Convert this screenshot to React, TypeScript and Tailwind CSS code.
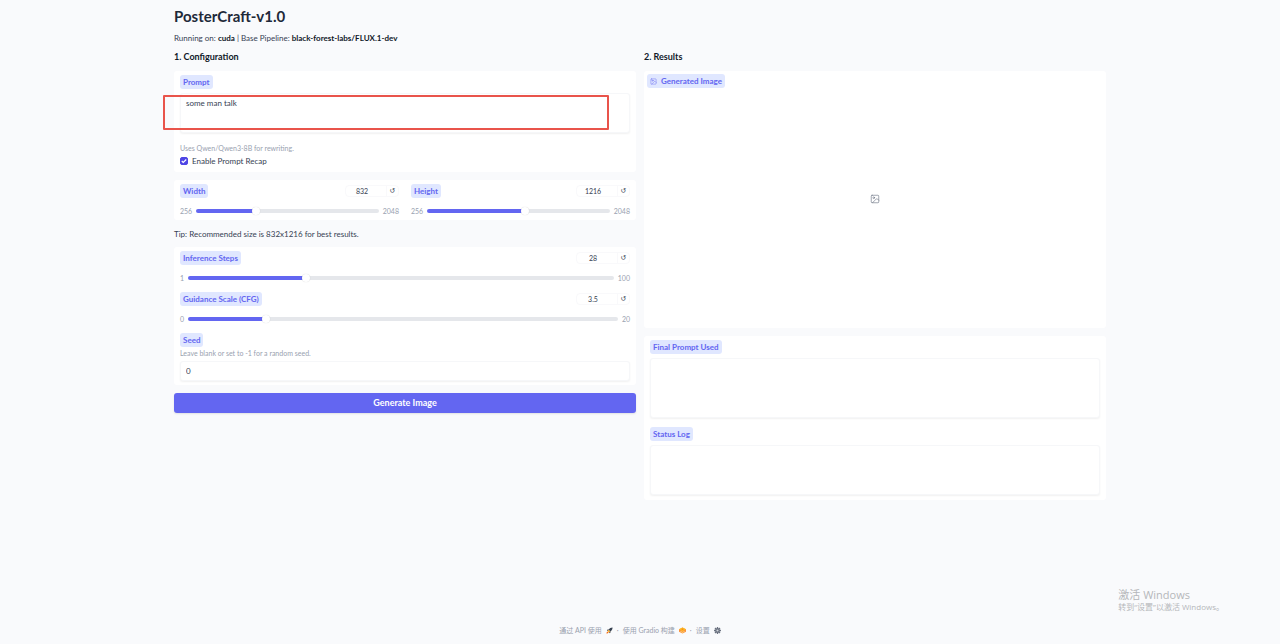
import { useId, useState } from "react";
import type { ReactNode } from "react";
import { Image as ImageIcon } from "lucide-react";

const CHIP =
  "flex w-fit h-3.5 items-center gap-1 rounded-[3px] bg-[#e0e7ff] px-[3px] text-[8px] font-bold whitespace-nowrap text-[#6366f1]";
const FIELD =
  "block w-full resize-none rounded-[3px] border border-[#f6f7f9] bg-white px-[5px] text-[8px] text-gray-700 shadow-[0_1px_2px_rgba(0,0,0,0.06)] outline-none";

function Card({ className = "", children }: { className?: string; children: ReactNode }) {
  return <div className={`rounded-[3px] bg-white ${className}`}>{children}</div>;
}

type SliderFieldProps = {
  label: string;
  min: number;
  max: number;
  step?: number;
  initial: number;
};

// Chip label, number box with reset, and the range below, all on one value.
function SliderField({ label, min, max, step = 1, initial }: SliderFieldProps) {
  const id = useId();
  const [value, setValue] = useState(initial);
  const percent = ((value - min) / (max - min)) * 100;

  return (
    <div className="flex flex-col gap-[7px]">
      <div className="flex h-3.5 items-center justify-between">
        <label htmlFor={id} className={CHIP}>
          {label}
        </label>
        <div className="flex h-3 overflow-hidden rounded-sm border border-[#f9f9fb]">
          <input
            type="number"
            aria-label={`${label} value`}
            min={min}
            max={max}
            step={step}
            value={value}
            onChange={(e) => setValue(Number(e.target.value))}
            className="w-10 appearance-none pr-2 text-center text-[7px] text-gray-700 outline-none [appearance:textfield] [&::-webkit-inner-spin-button]:appearance-none"
          />
          <button
            type="button"
            aria-label={`Reset ${label}`}
            onClick={() => setValue(initial)}
            className="flex w-3 items-center justify-center border-l border-[#f9f9fb] font-['DejaVu_Sans'] text-[7px] text-gray-700"
          >
            ↺
          </button>
        </div>
      </div>
      <div className="flex h-3 items-center gap-1 text-[7px] text-gray-400">
        <span>{min}</span>
        <input
          id={id}
          type="range"
          min={min}
          max={max}
          step={step}
          value={value}
          onChange={(e) => setValue(Number(e.target.value))}
          style={{ backgroundImage: `linear-gradient(to right, #6366f1 ${percent}%, #e5e7eb ${percent}%)` }}
          className="h-1 min-w-0 flex-1 appearance-none rounded-full [&::-webkit-slider-thumb]:size-2 [&::-webkit-slider-thumb]:appearance-none [&::-webkit-slider-thumb]:rounded-full [&::-webkit-slider-thumb]:bg-white [&::-webkit-slider-thumb]:shadow-[0_0_1px_rgba(0,0,0,0.2)]"
        />
        <span>{max}</span>
      </div>
    </div>
  );
}

function RocketIcon() {
  return (
    <svg viewBox="0 0 16 16" className="size-[7px]" aria-hidden="true">
      <path d="M15 1c-4 0-7 2-9 5l4 4c3-2 5-5 5-9Z" fill="#374151" />
      <path d="M6 5 2 7l2 2 2-3Zm5 5-2 4-2-2 3-2Z" fill="#1f2937" />
      <path d="m5 6 5 5-3 1-3-3 1-3Z" fill="#f59e0b" />
      <path d="M4 10c-2 0-3 3-3 5 2 0 5-1 5-3l-2-2Z" fill="#f97316" />
    </svg>
  );
}

function GradioIcon() {
  return (
    <svg viewBox="0 0 16 16" className="size-[7px]" aria-hidden="true">
      <path d="M8 1 0 5v6l8 4 8-4V5L8 1Z" fill="#fb923c" />
      <path d="M8 1 0 5l8 4 8-4-8-4Z" fill="#fbbf24" />
      <path d="m5 5 3-1.5L11 5 8 6.5 5 5Z" fill="#f97316" />
      <path d="m3 9 5 2.5L13 9v1.500l-5 2.500-5-2.500V9Z" fill="#fde68a" />
    </svg>
  );
}

function GearIcon() {
  return (
    <svg viewBox="0 0 16 16" className="size-[7px]" aria-hidden="true">
      <g stroke="#6b7280" strokeWidth="3">
        <path d="M8 0v16M0 8h16M2.3 2.3l11.4 11.4M13.7 2.3 2.3 13.7" />
      </g>
      <circle cx="8" cy="8" r="5" fill="#6b7280" />
      <circle cx="8" cy="8" r="2.4" fill="#d1d5db" />
    </svg>
  );
}

function Configuration() {
  const [prompt, setPrompt] = useState("some man talk");
  const [recap, setRecap] = useState(true);
  const [seed, setSeed] = useState("0");

  return (
    <section className="flex min-w-0 flex-1 flex-col">
      <h2 className="text-[9px] leading-3 font-bold text-gray-900">1. Configuration</h2>

      <Card className="relative mt-2 px-1.5 pt-1 pb-[5px]">
        <label htmlFor="prompt" className={CHIP}>
          Prompt
        </label>
        <textarea
          id="prompt"
          value={prompt}
          onChange={(e) => setPrompt(e.target.value)}
          className={`${FIELD} mt-1 h-10 py-1 leading-[10px]`}
        />
        <p className="mt-2.5 text-[7px] leading-2.5 text-gray-400">Uses Qwen/Qwen3-8B for rewriting.</p>
        <label className="mt-0.5 flex h-3 items-center gap-1 text-[8px] text-gray-700">
          <input
            type="checkbox"
            checked={recap}
            onChange={(e) => setRecap(e.target.checked)}
            className="peer sr-only"
          />
          <span className="flex size-2 items-center justify-center rounded-xs border border-[#4f46e5] peer-checked:bg-[#4f46e5]">
            <svg viewBox="0 0 16 16" className="size-2" aria-hidden="true">
              <path d="m2 8 4 4 8-8" fill="none" stroke="#fff" strokeWidth="3" />
            </svg>
          </span>
          Enable Prompt Recap
        </label>
        {/* Highlight drawn over the prompt field */}
        <div className="pointer-events-none absolute top-6 right-[27px] -left-[11px] h-[35px] rounded-[1px] border-2 border-[#e9544b]" />
      </Card>

      <Card className="mt-2 grid grid-cols-2 gap-3 px-1.5 pt-1 pb-[3px]">
        <SliderField label="Width" min={256} max={2048} step={64} initial={832} />
        <SliderField label="Height" min={256} max={2048} step={64} initial={1216} />
      </Card>

      <p className="mt-2 text-[8px] leading-3 text-gray-700">
        Tip: Recommended size is 832x1216 for best results.
      </p>

      <Card className="mt-[7px] flex flex-col gap-2 px-1.5 pt-1 pb-1">
        <SliderField label="Inference Steps" min={1} max={100} initial={28} />
        <SliderField label="Guidance Scale (CFG)" min={0} max={20} step={0.1} initial={3.5} />
        <div>
          <label htmlFor="seed" className={CHIP}>
            Seed
          </label>
          <p className="mt-px text-[7px] leading-2.5 text-gray-400">Leave blank or set to -1 for a random seed.</p>
          <input
            id="seed"
            type="text"
            inputMode="numeric"
            value={seed}
            onChange={(e) => setSeed(e.target.value)}
            className={`${FIELD} mt-[3px] h-5`}
          />
        </div>
      </Card>

      <button
        type="button"
        className="mt-2 h-5 rounded-[3px] bg-[#6366f1] text-[9px] font-bold text-white shadow-[0_1px_2px_rgba(0,0,0,0.1)]"
      >
        Generate Image
      </button>
    </section>
  );
}

function Results() {
  return (
    <section className="flex min-w-0 flex-1 flex-col">
      <h2 className="text-[9px] leading-3 font-bold text-gray-900">2. Results</h2>

      <Card className="mt-2 flex h-[257px] flex-col p-[3px]">
        <div className={CHIP}>
          <ImageIcon className="size-[7px]" strokeWidth={1.5} />
          Generated Image
        </div>
        <div className="flex flex-1 items-center justify-center pb-4">
          <ImageIcon className="size-2.5 text-gray-500" strokeWidth={1.5} />
        </div>
      </Card>

      <Card className="mt-2 px-1.5 pt-1 pb-[5px]">
        <label htmlFor="final-prompt" className={CHIP}>
          Final Prompt Used
        </label>
        <textarea id="final-prompt" readOnly className={`${FIELD} mt-1 h-[60px]`} />
        <label htmlFor="status-log" className={`${CHIP} mt-[9px]`}>
          Status Log
        </label>
        <textarea id="status-log" readOnly className={`${FIELD} mt-1 h-[50px]`} />
      </Card>
    </section>
  );
}

export default function App() {
  return (
    <div className="relative flex min-h-screen flex-col bg-[#f9fafc] font-['Lato','Noto_Sans_CJK_SC',sans-serif] text-gray-700">
      <main className="mx-auto w-full max-w-[932px] flex-1">
        <h1 className="pt-2 text-[15px] leading-4 font-bold text-gray-800">PosterCraft-v1.0</h1>
        <p className="mt-2 text-[8px] leading-3">
          Running on: <strong className="font-bold text-gray-900">cuda</strong> | Base Pipeline:{" "}
          <strong className="font-bold text-gray-900">black-forest-labs/FLUX.1-dev</strong>
        </p>
        <div className="mt-[7px] flex items-start gap-2">
          <Configuration />
          <Results />
        </div>
      </main>

      <footer className="flex items-center justify-center gap-1 pb-[9px] text-[7px] leading-2.5 text-gray-400">
        <a href="#api" className="flex items-center gap-1">
          通过 API 使用 <RocketIcon />
        </a>
        <span>·</span>
        <a href="#gradio" className="flex items-center gap-1">
          使用 Gradio 构建 <GradioIcon />
        </a>
        <span>·</span>
        <a href="#settings" className="flex items-center gap-1">
          设置 <GearIcon />
        </a>
      </footer>

      {/* System activation notice floating above the page */}
      <div className="pointer-events-none absolute right-14 bottom-8 font-['Open_Sans','Noto_Sans_CJK_SC',sans-serif] text-[#b5b7ba]">
        <p className="text-[11px] leading-3.5">激活 Windows</p>
        <p className="text-[8px] leading-2.5">转到“设置”以激活 Windows。</p>
      </div>
    </div>
  );
}
